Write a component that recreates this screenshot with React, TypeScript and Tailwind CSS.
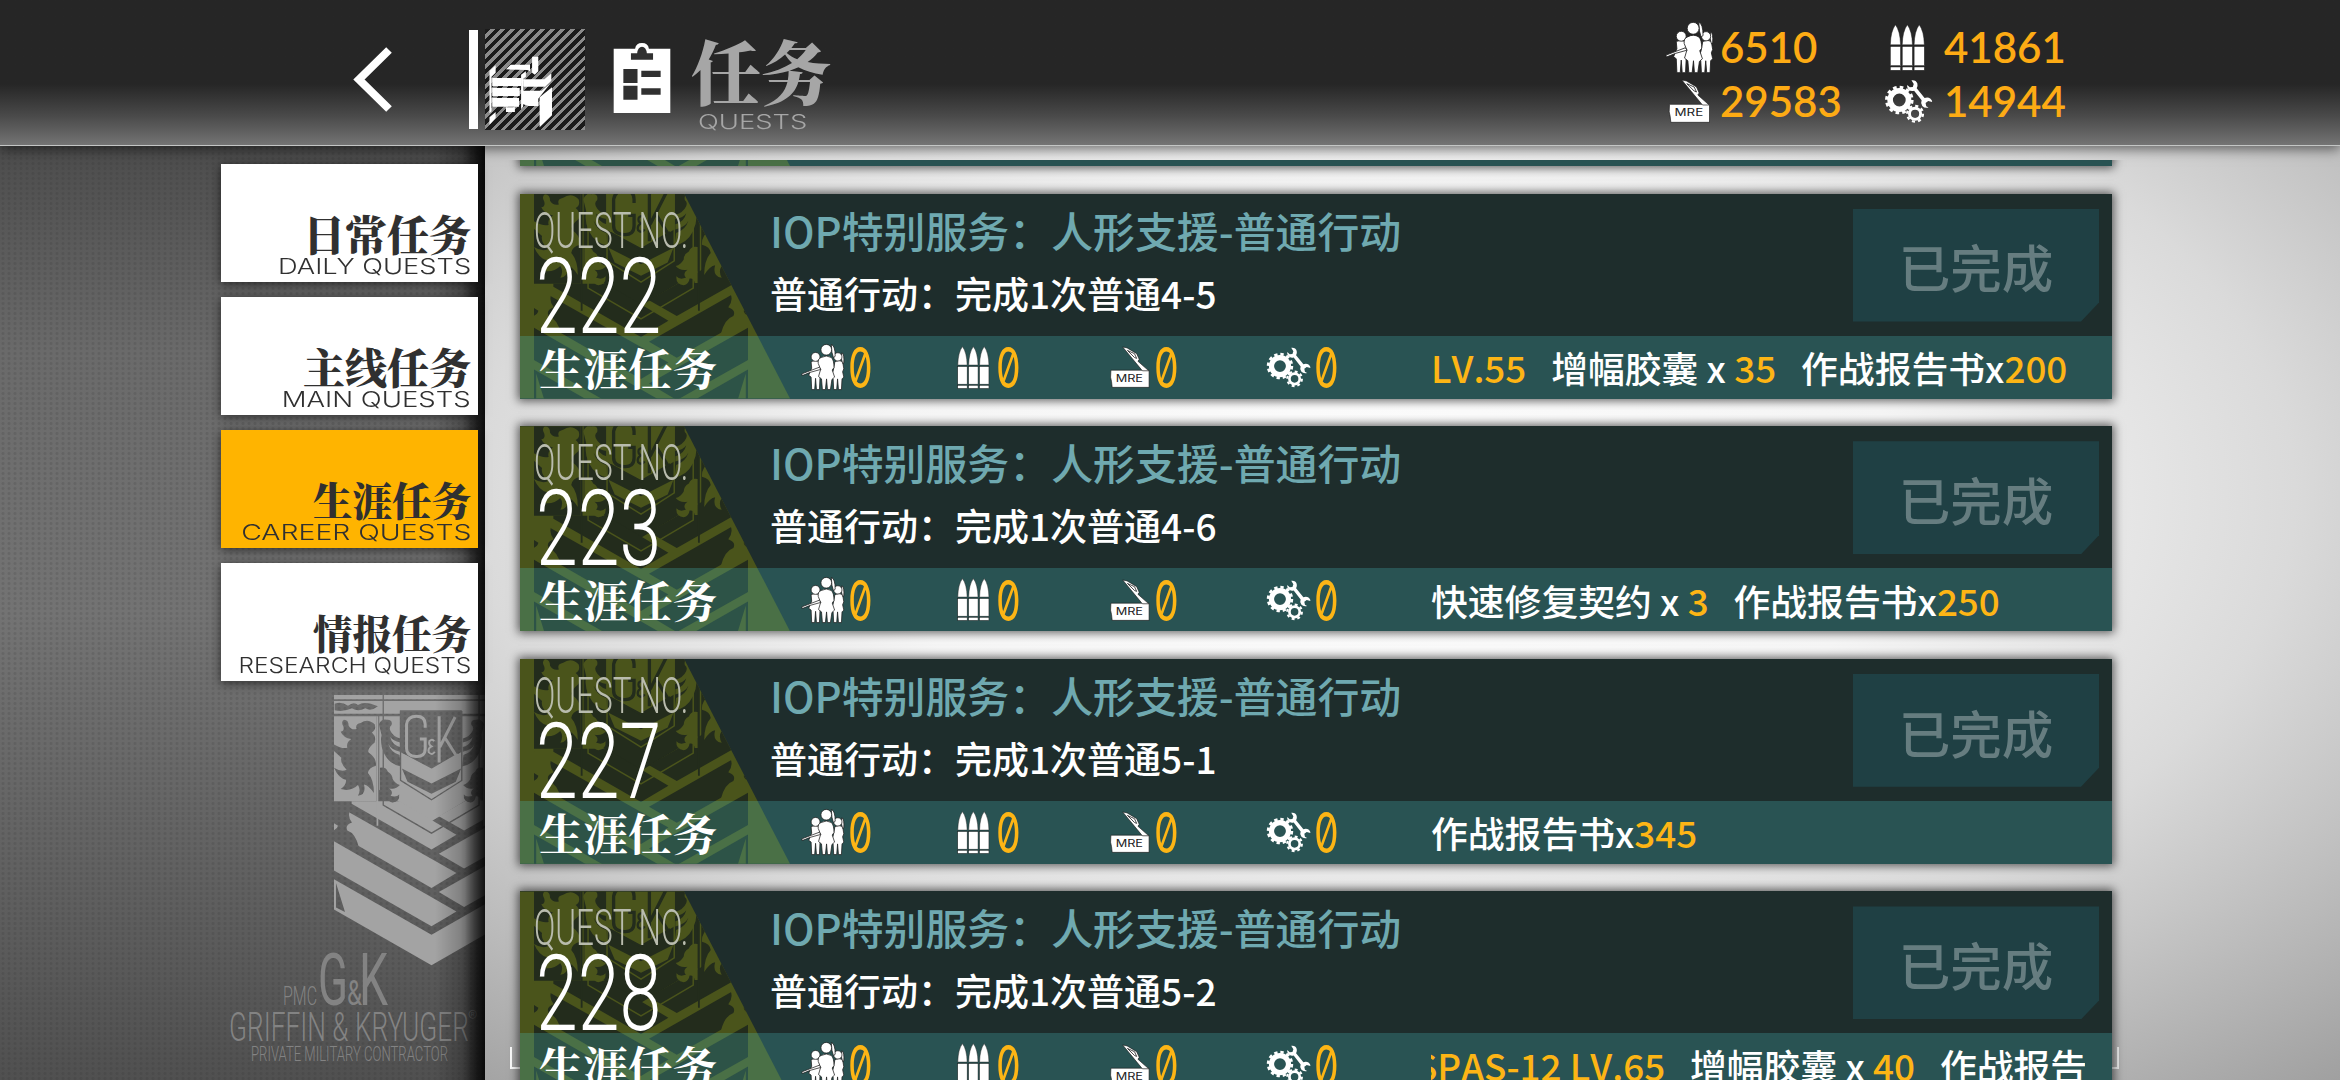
import { useId } from "react";
import type { ReactNode } from "react";

type Part = { text: string; hot?: boolean };

type Quest = {
  no: string;
  title: string;
  detail: string;
  rewards: Part[];
  scrolled?: boolean;
};

const TITLE = "IOP特别服务：人形支援-普通行动";

const quests: Quest[] = [
  {
    no: "222",
    title: TITLE,
    detail: "普通行动：完成1次普通4-5",
    rewards: [
      { text: "LV.55", hot: true },
      { text: "   增幅胶囊 x " },
      { text: "35", hot: true },
      { text: "   作战报告书x" },
      { text: "200", hot: true },
    ],
  },
  {
    no: "223",
    title: TITLE,
    detail: "普通行动：完成1次普通4-6",
    rewards: [
      { text: "快速修复契约 x " },
      { text: "3", hot: true },
      { text: "   作战报告书x" },
      { text: "250", hot: true },
    ],
  },
  {
    no: "227",
    title: TITLE,
    detail: "普通行动：完成1次普通5-1",
    rewards: [{ text: "作战报告书x" }, { text: "345", hot: true }],
  },
  {
    no: "228",
    title: TITLE,
    detail: "普通行动：完成1次普通5-2",
    scrolled: true,
    rewards: [
      { text: "SPAS-12 LV.65", hot: true },
      { text: "   增幅胶囊 x " },
      { text: "40", hot: true },
      { text: "   作战报告" },
    ],
  },
];

const tabs = [
  { zh: "日常任务", en: "DAILY QUESTS", zhSize: "text-[42px]", enScale: "scale-x-[1.27]" },
  { zh: "主线任务", en: "MAIN QUESTS", zhSize: "text-[42px]", enScale: "scale-x-[1.28]" },
  { zh: "生涯任务", en: "CAREER QUESTS", zhSize: "text-[39.5px]", enScale: "scale-x-[1.32]", active: true },
  { zh: "情报任务", en: "RESEARCH QUESTS", zhSize: "text-[39.5px]", enScale: "scale-x-[1.14]" },
];

function ManpowerIcon({ className }: { className: string }) {
  return (
    <svg className={className} viewBox="74 62 148 160" fill="#fff" stroke="#1c1c1c" strokeWidth="2.5">
      <path d="M108 124q14-8 28 0l2 22 8 24-8 6-2 42h-10l-3-38-3 38h-10l-2-42-8-6 10-24z" />
      <path d="M188 124q14-8 26 0l4 24-4 10 4 18-6 6-2 36h-10l-3-36-3 36h-10l-2-36-7-6 8-24z" />
      <path d="M212 94q8 6 6 34l-4 2-5-20z" />
      <circle cx="123" cy="108" r="15" />
      <circle cx="198" cy="108" r="14" />
      <path d="M176 66q13 4 13 40l-6 4-5-18z" />
      <path d="M142 110q18-10 34 0 9 8 9 34l-6 8 8 24-9 8-5 34h-10l-3-36-4 36h-10l-3-36-10-8 7-24-8-20q-2-16 10-20z" />
      <circle cx="159" cy="84" r="18" />
      <path d="M77 165l58-22 6 7-36 10-27 11z" />
    </svg>
  );
}

function AmmoIcon({ className }: { className: string }) {
  return (
    <svg className={className} viewBox="750 76 106 142" fill="#fff" stroke="#1c1c1c" strokeWidth="1.5">
      {[751, 787, 823].map((x) => (
        <g key={x} transform={`translate(${x} 0)`}>
          <path d="M0 139q1-42 15.500-61 14.500 19 15.500 61z" />
          <rect x="0" y="144" width="31" height="58" />
          <rect x="0" y="206" width="31" height="10" />
        </g>
      ))}
    </svg>
  );
}

function RationIcon({ className }: { className: string }) {
  return (
    <svg className={className} viewBox="84 228 128 132">
      <path d="M88 304h120v54H92l-2-18-3-14z" fill="#fff" stroke="#1c1c1c" strokeWidth="2" />
      <path d="M125 231l14 3 30 18 8 18-4 6 34 30h-20z" fill="#fff" stroke="#1c1c1c" strokeWidth="2" />
      <path d="M140 242l22 10 7 15-7-3z" fill="none" stroke="#1c1c1c" strokeWidth="2.5" />
      <text
        x="103"
        y="340"
        fontFamily="Inter, sans-serif"
        fontSize="31"
        textLength="86"
        lengthAdjust="spacingAndGlyphs"
        fill="#222"
      >
        MRE
      </text>
    </svg>
  );
}

function PartsIcon({ className }: { className: string }) {
  return (
    <svg className={className} viewBox="730 226 148 134">
      <g fill="none" stroke="#fff">
        <circle cx="776" cy="290" r="28" strokeWidth="17" />
        <circle cx="776" cy="290" r="39" strokeWidth="9" strokeDasharray="11 9.42" />
        <circle cx="824" cy="332" r="17" strokeWidth="9" />
        <circle cx="824" cy="332" r="24" strokeWidth="7" strokeDasharray="9.4 9.4" />
      </g>
      <path
        d="M813 230q14-2 18 10 2 8-2 14l24 30q10-4 18 2 6 6 5 10l-12-3-8 6 2 10 7 4q-12 3-19-5-6-8-2-17l-23-29q-10 3-17-4-6-6-4-14l8 7 9-1 3-9z"
        fill="#fff"
      />
    </svg>
  );
}

// Griffin & Kryuger banner; shapes are laid on a 586 x 812 grid
function Banner({ className }: { className: string }) {
  const id = useId();
  return (
    <svg className={className} viewBox="402 42 586 812" preserveAspectRatio="none" fill="currentColor">
      <mask id={id} maskUnits="userSpaceOnUse" x="402" y="42" width="586" height="812">
        <rect x="402" y="42" width="586" height="812" fill="#fff" />
        <g fill="#000">
          <path d="M408 605l27 87-27-13zM982 605l-27 87 27-13z" />
          <path d="M600 88h186v124l-91 54-95-54z" />
          <path d="M606 262l89 45 89-45-16 40-73 36-72-36z" />
        </g>
        <g fill="none" stroke="#000" strokeWidth="4">
          <path d="M602 90v208l93 58 91-58V90" />
          <path d="M550 42v330l145 84 143-84V42" />
        </g>
        {[false, true].map((flip) => (
          <g key={String(flip)} fill="#000" transform={flip ? "translate(1390 0) scale(-1 1)" : undefined}>
            <path d="M537 130q6-16 22-14 20-2 16 16-8 6-4 16 8 18 30 24v12q-22-4-30-16 6 24 30 30v14q-28-6-36-24 8 26 34 34l4 34q-34-6-50-38-14-28-8-56z" />
            <path d="M540 260q18-4 24 12 14 8 14 22 8 14 22 18-12 14-32 10 14 10 4 22 18 6 26-4 2 22-20 24-14-2-16-18-12-2-14 12h-8z" />
            <path d="M404 68q20-8 40 6 18-14 30-2 20-14 60 4-20 16-38 6-22 12-40 0-26 12-52 6z" />
            <path d="M482 126q22-16 42 4 6 16-8 24 14 12 8 30-24 20-18 30 24 16 22 40-22 6-24 22 18 20 18 60-16-24-30-26 8 30-18 34 10-18 0-32-20 20-52 12 18-12 16-28-22-4-36-36 22 14 38 6-20-20-16-36l-22-20v-20q24 14 40 10-4-16 12-26-24-4-32-22 12-2 8-16-8-14 2-20 14 0 14 18 8 14 24 10-6-14 12-18z" />
            <path d="M402 366q40 4 50 18-12 20 4 40-22 8-14 24 24 8 34 48l-40-6-36-24V448q12-4 14-14l-12-8z" />
          </g>
        ))}
      </mask>
      <g mask={`url(#${id})`}>
        <path d="M402 42h586v13H402z" />
        <path d="M402 60h586v38H402z" />
        <path d="M402 106h128v254H402zM860 106h128v254H860z" />
        <path d="M538 106h314v220l-157 94-157-94z" />
        <path d="M455 360h145l170 101-75 44-240-137zM402 368l368 207-75 45-293-168zM402 480l368 211-75 44-293-167z" />
        <path d="M717 405l150-86h60l-134 129zM717 405l271-155v88L793 448zM717 518l271-153v87L793 562zM717 632l271-152v88L793 677z" />
        <path d="M402 594l293 166 293-166v90L695 852 402 685z" />
        <path d="M530 106h5v328h-5zM851 106h5v328h-5z" />
      </g>
      <g fill="none" stroke="currentColor" strokeWidth="9">
        <path d="M676 140v-10q0-24-26-24t-30 24v72q0 22 28 24t28-24v-28h-16M718 106v138M766 108l-46 90M734 168l34 54" />
        <path d="M705 212q-8 12-18 2-4-12 8-18-10-6-6-16 8-8 14 0" strokeWidth="6" />
        <path d="M612 222l83 44 80-46" strokeWidth="6" />
      </g>
    </svg>
  );
}

function CompanyLogo() {
  return (
    <svg
      className="mt-[-16px] ml-[226px] h-[116px] w-[256px] shrink-0 text-[#838383]"
      viewBox="226 948 256 116"
      fill="currentColor"
      fontFamily="Roboto, sans-serif"
      fontWeight="300"
    >
      <text x="283" y="1003" fontSize="25" textLength="34" lengthAdjust="spacingAndGlyphs">PMC</text>
      <text x="318" y="1003" fontSize="72" fontWeight="400" textLength="30" lengthAdjust="spacingAndGlyphs">G</text>
      <text x="347" y="1003" fontSize="35" fontWeight="400" textLength="15" lengthAdjust="spacingAndGlyphs">&amp;</text>
      <text x="359" y="1003" fontSize="72" fontWeight="400" textLength="29" lengthAdjust="spacingAndGlyphs">K</text>
      <text x="229" y="1039" fontSize="41" textLength="240" lengthAdjust="spacingAndGlyphs">GRIFFIN &amp; KRYUGER</text>
      <text x="468" y="1019" fontSize="14" fontFamily="Inter, sans-serif">®</text>
      <text x="251" y="1059" fontSize="21" textLength="197" lengthAdjust="spacingAndGlyphs">PRIVATE MILITARY CONTRACTOR</text>
    </svg>
  );
}

function Resource({ icon, value, iconBox }: { icon: ReactNode; value: string; iconBox: string }) {
  return (
    <div className="flex h-[54px] items-center">
      <div className={`flex shrink-0 items-center ${iconBox}`}>{icon}</div>
      <span className="font-[Lato] text-[42px] leading-none font-semibold text-[#fdab14]">{value}</span>
    </div>
  );
}

function Header() {
  return (
    <header className="relative z-10 flex h-[146px] shrink-0 border-b border-[#c4c6c5] bg-linear-to-b from-[#262626] from-58% via-[#4a4a4a] via-80% to-[#747474] shadow-[0_3px_12px_rgba(0,0,0,0.55)]">
      <svg className="mt-[46px] ml-[353px] h-[67px] w-[40px]" viewBox="0 0 40 67" fill="none" stroke="#fff" strokeWidth="8">
        <path d="M36 4L6 33.5 36 63" />
      </svg>
      <div className="mt-[30px] ml-[76px] h-[99px] w-[9px] bg-white" />
      <div className="mt-[29px] ml-[7px] h-[101px] w-[100px] bg-[repeating-linear-gradient(135deg,#1b1b1b_0px,#1b1b1b_4px,#8b8b8b_4px,#8b8b8b_7.1px)]">
        <svg className="h-[101px] w-[100px]" viewBox="479 87 291 303" preserveAspectRatio="none" fill="#fff">
          <path d="M492 212l18-16v22l-12 12v104l-6 6zM492 352l18-16v18l-18 20z" />
          <path d="M540 208l14-14h56v20l-8-4zM616 170h18v44l-10 10-8-6z" />
          <path d="M500 234h84v24h-84zM500 264h80v24h-80zM500 294h78v26h-78zM540 322h26v14h-26z" />
          <path d="M590 238h62l20-18v22l-18 18h-64zM588 272h56l24-20-34 44v22h-28l-18-6z" />
          <path d="M584 224l14-10v16l-8 6v84l-6 8zM638 292l36-30v84l-36 36z" />
        </svg>
      </div>
      <svg className="mt-[42px] ml-[28px] h-[72px] w-[58px]" viewBox="852 126 168 216" preserveAspectRatio="none">
        <path d="M854 146h62q2-17 20-17t20 17h62v193H854z" fill="#fff" />
        <path d="M904 160h18q2-20 14-20t14 20h18v19h-64z" fill="#303030" />
        <path d="M882 207h41v42h-41zM882 257h41v42h-41zM934 212h56v19h-56zM934 265h56v19h-56z" fill="#303030" />
      </svg>
      <div className="mt-[35px] ml-[20px] flex w-[150px] flex-col text-[#a6a6a6]">
        <span className="font-['Noto_Serif_CJK_SC','Noto_Sans_CJK_SC',serif] text-[70px] leading-[70px] font-black">任务</span>
        <span className="mt-[7px] ml-[7px] origin-left scale-x-[1.37] font-[Inter] text-[20px] leading-[20px] font-light">
          QUESTS
        </span>
      </div>
      <div className="mt-[20px] ml-[824px] grid h-[108px] grid-cols-[219px_200px]">
        <Resource iconBox="w-[55px]" icon={<ManpowerIcon className="h-[53px] w-[49px]" />} value="6510" />
        <Resource iconBox="w-[60px] pl-[6px]" icon={<AmmoIcon className="h-[47px] w-[35px]" />} value="41861" />
        <Resource iconBox="w-[55px] pl-[3px]" icon={<RationIcon className="h-[44px] w-[43px]" />} value="29583" />
        <Resource iconBox="w-[60px]" icon={<PartsIcon className="h-[44px] w-[49px]" />} value="14944" />
      </div>
    </header>
  );
}

function Sidebar() {
  return (
    <aside className="relative flex w-[485px] shrink-0 flex-col bg-[radial-gradient(circle,rgba(40,40,40,0.14)_1px,transparent_2px),linear-gradient(180deg,#4c4c4c_0%,#6a6a6a_22%,#737373_50%,#5f5f5f_80%,#505050_100%)] bg-[size:6px_5px,100%_100%]">
      <div className="absolute inset-y-0 right-0 w-[50px] bg-linear-to-l from-black/70 via-black/20 to-transparent" />
      <nav className="relative z-10 mt-[18px] ml-[221px] flex w-[257px] flex-col gap-[15px]">
        {tabs.map((tab) => (
          <button
            key={tab.en}
            className={`flex h-[118px] flex-col items-end pt-[48px] pr-[7px] text-[#303030] shadow-[0_2px_10px_rgba(0,0,0,0.6)] ${
              tab.active ? "bg-[#ffb400]" : "bg-white"
            }`}
          >
            <span
              className={`font-['Noto_Serif_CJK_SC','Noto_Sans_CJK_SC',serif] leading-[42px] font-black ${tab.zhSize}`}
            >
              {tab.zh}
            </span>
            <span
              className={`mt-[2px] origin-right font-[Inter] text-[21.5px] leading-[20px] font-light whitespace-nowrap ${tab.enScale}`}
            >
              {tab.en}
            </span>
          </button>
        ))}
      </nav>
      <div className="mt-[14px] ml-[334px] h-[271px] w-[151px] shrink-0 overflow-hidden">
        <Banner className="h-[271px] w-[195px] max-w-none text-[#a3a3a3]" />
      </div>
      <CompanyLogo />
      <div className="absolute inset-y-0 right-0 w-[20px] bg-linear-to-l from-black/60 to-transparent" />
    </aside>
  );
}

function Cost({ icon, box }: { icon: ReactNode; box: string }) {
  return (
    <div className={`flex shrink-0 items-center ${box}`}>
      {icon}
      <span className="mt-[2px] ml-[3px] w-[24px] origin-left scale-x-[0.7] font-[Inter] text-[56px] leading-none text-[#fdb515] slashed-zero">
        0
      </span>
    </div>
  );
}

function CardBackdrop() {
  return (
    <div className="absolute inset-y-0 left-0 w-[270px] overflow-hidden bg-[#4a541b] [clip-path:polygon(0_0,164px_0,270px_100%,0_100%)]">
      <Banner className="-mt-[27px] ml-[14px] h-[298px] w-[214px] text-[#232c1c]" />
    </div>
  );
}

function QuestCard({ quest }: { quest: Quest }) {
  return (
    <article className="relative h-[205px] w-[1592px] shrink-0 bg-[#1e2d2c] shadow-[0_0_9px_2px_rgba(0,0,0,0.6)]">
      <CardBackdrop />
      <div className="relative flex h-[142px]">
        <div className="w-[250px] shrink-0 pt-[12px] pl-[14px]">
          <div className="h-[43px] w-max origin-left scale-x-[0.63] font-[Roboto] text-[50px] leading-[50px] font-light whitespace-nowrap text-[#b9bcae]">
            QUEST NO.
          </div>
          <div className="mt-[2px] ml-[2px] w-max origin-left scale-x-[0.71] font-[Roboto] text-[106px] leading-[92px] font-light text-white">
            {quest.no}
          </div>
        </div>
        <div className="flex-1 pt-[13px] font-['Noto_Sans_CJK_SC',sans-serif] font-medium whitespace-nowrap [font-kerning:none]">
          <h2 className="text-[41.9px] leading-[46px] text-[#6fa9b0]">{quest.title}</h2>
          <p className="mt-[19px] text-[37px] leading-[42px] text-white">{quest.detail}</p>
        </div>
        <div className="mt-[15px] mr-[13px] flex h-[113px] w-[246px] items-center justify-center bg-[#1f4044] pt-[2px] font-['Noto_Sans_CJK_SC',sans-serif] text-[51.5px] leading-none font-medium text-[#667d80] [clip-path:polygon(0_0,100%_0,100%_94px,228px_100%,0_100%)]">
          已完成
        </div>
      </div>
      <div className="relative flex h-[63px] items-center bg-[rgba(74,190,190,0.27)]">
        <span className="w-[281px] shrink-0 pl-[19px] font-['Noto_Serif_CJK_SC','Noto_Sans_CJK_SC',serif] text-[44.5px] leading-none font-bold text-white">
          生涯任务
        </span>
        <Cost box="w-[153px]" icon={<ManpowerIcon className="h-[48px] w-[44px]" />} />
        <Cost box="w-[155px]" icon={<AmmoIcon className="h-[43px] w-[39px]" />} />
        <Cost box="w-[157px]" icon={<RationIcon className="h-[42px] w-[42px]" />} />
        <Cost box="w-[165px]" icon={<PartsIcon className="h-[42px] w-[45px]" />} />
        <div className="w-[654px] overflow-hidden font-['Noto_Sans_CJK_SC',sans-serif] text-[36.8px] leading-[56px] font-medium whitespace-pre text-white [font-kerning:none]">
          <div className={quest.scrolled ? "-ml-[16px]" : undefined}>
            {quest.rewards.map((part, i) => (
              <span key={i} className={part.hot ? "text-[#fdb515]" : undefined}>
                {part.text}
              </span>
            ))}
          </div>
        </div>
      </div>
    </article>
  );
}

export default function App() {
  return (
    <div className="flex h-[1080px] w-[2340px] flex-col overflow-hidden bg-[#999]">
      <Header />
      <div className="flex min-h-0 flex-1">
        <Sidebar />
        <main className="relative flex-1 bg-[radial-gradient(ellipse_1300px_720px_at_900px_350px,#ffffff_0%,#f6f6f6_40%,#dadada_70%,#9f9f9f_110%)] pt-[14px]">
          <div className="absolute bottom-[11px] left-[25px] h-[22px] w-[12px] border-b-2 border-l-2 border-white" />
          <div className="absolute bottom-[11px] left-[1625px] h-[22px] w-[9px] border-r-2 border-b-2 border-white/80" />
          <div className="relative h-[920px] w-[1680px] overflow-hidden pl-[35px]">
            <div className="-mt-[199px] flex flex-col gap-[27.6px]">
              {/* the card scrolled out above the list, only its foot shows */}
              <div className="relative flex h-[205px] w-[1592px] shrink-0 flex-col justify-end bg-[#1e2d2c] shadow-[0_0_9px_2px_rgba(0,0,0,0.6)]">
                <CardBackdrop />
                <div className="relative h-[63px] bg-[rgba(74,190,190,0.27)]" />
              </div>
              {quests.map((quest) => (
                <QuestCard key={quest.no} quest={quest} />
              ))}
            </div>
          </div>
        </main>
      </div>
    </div>
  );
}
